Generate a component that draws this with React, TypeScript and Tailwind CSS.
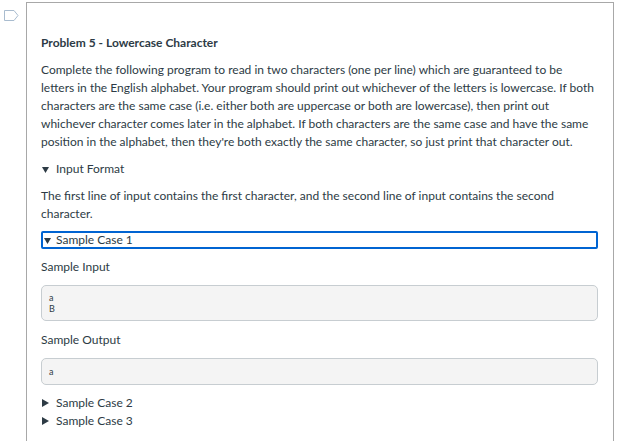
import React from "react";

function Down() {
  return (
    <svg width="7" height="7" viewBox="0 0 7 7" className="shrink-0">
      <polygon points="0,1 7,1 3.5,7" fill="#2d3b45" />
    </svg>
  );
}
function Right() {
  return (
    <svg width="7" height="8" viewBox="0 0 7 8" className="shrink-0">
      <polygon points="0,0 7,4 0,8" fill="#2d3b45" />
    </svg>
  );
}

export default function App() {
  return (
    <div
      className="w-[631px] h-[441px] overflow-hidden bg-white flex text-[#2d3b45]"
      style={{ fontFamily: "Lato, 'Noto Sans', sans-serif" }}
    >
      <div className="w-[26px] shrink-0 pt-[10px] pl-[4px]">
        <svg width="15" height="11" viewBox="0 0 15 11">
          <path d="M0.5 0.5 H10 L14 5.5 L10 10.5 H0.5 Z" fill="none" stroke="#a9bccf" strokeWidth="1" strokeLinejoin="round" />
        </svg>
      </div>
      <div className="mt-[2px] w-[588px] h-[500px] border border-[#a8a8a8] pl-[14px] pr-[15px] pt-[31px] text-[12px] leading-[18px]">
        <div className="font-bold">Problem 5 - Lowercase Character</div>
        <p className="mt-[9px]">
          Complete the following program to read in two characters (one per line) which are guaranteed to be letters in the English alphabet. Your program should print out whichever of the letters is lowercase. If both characters are the same case (i.e. either both are uppercase or both are lowercase), then print out whichever character comes later in the alphabet. If both characters are the same case and have the same position in the alphabet, then they're both exactly the same character, so just print that character out.
        </p>
        <div className="mt-[9px] flex items-center gap-[7px] pl-[1px]">
          <Down />
          <span>Input Format</span>
        </div>
        <p className="mt-[9px]">
          The first line of input contains the first character, and the second line of input contains the second character.
        </p>
        <div className="mt-[8px] h-[18px] border-2 border-[#0064d2] rounded-[2px] flex items-center gap-[5px] pl-[1px] leading-[14px]">
          <Down />
          <span>Sample Case 1</span>
        </div>
        <div className="mt-[9px]">Sample Input</div>
        <div className="mt-[9px] h-[36px] bg-[#f4f4f4] border border-[#c7cdd1] rounded-[5px] pl-[7px] pt-[6px] text-[9px] leading-[11px]">
          <div>a</div>
          <div>B</div>
        </div>
        <div className="mt-[10px]">Sample Output</div>
        <div className="mt-[9px] h-[27px] bg-[#f4f4f4] border border-[#c7cdd1] rounded-[5px] pl-[7px] flex items-center text-[9px]">
          a
        </div>
        <div className="mt-[9px] flex items-center gap-[7px] pl-[1px]">
          <Right />
          <span>Sample Case 2</span>
        </div>
        <div className="flex items-center gap-[7px] pl-[1px]">
          <Right />
          <span>Sample Case 3</span>
        </div>
      </div>
    </div>
  );
}
